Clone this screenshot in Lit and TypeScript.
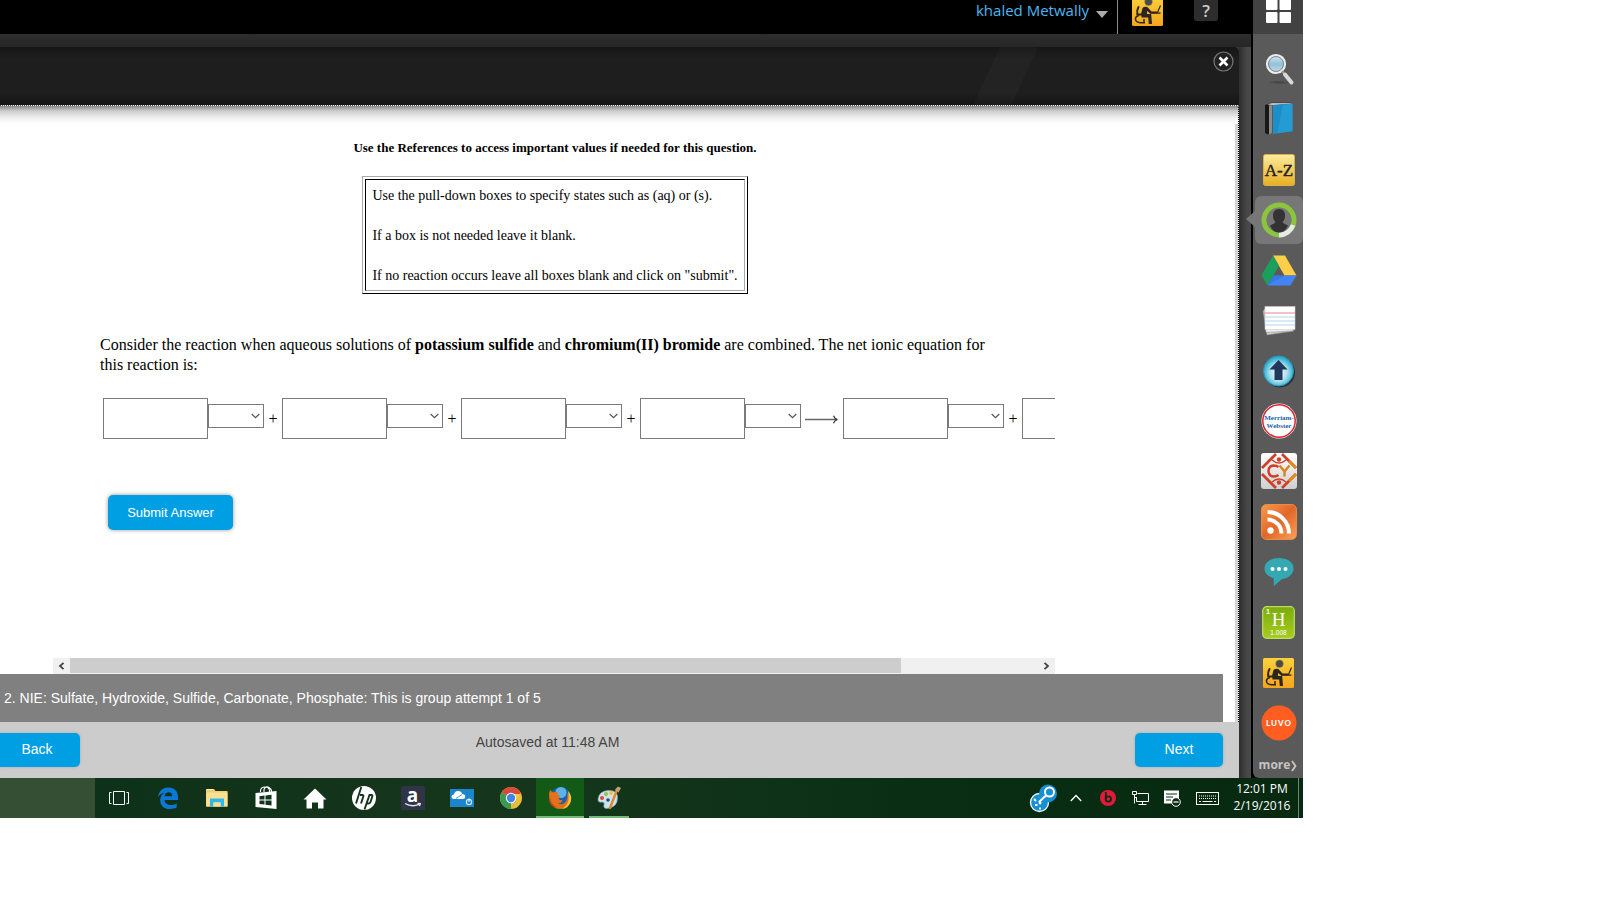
import { LitElement, html, css, svg, nothing, type TemplateResult } from "lit";
import { customElement, property } from "lit/decorators.js";
import { classMap } from "lit/directives/class-map.js";

const desk = svg`
  <defs><linearGradient id="desk" x1="0" y1="0" x2="0" y2="1"><stop offset="0" stop-color="#fbd23c"/><stop offset="1" stop-color="#f4a41c"/></linearGradient></defs>
  <rect width="31" height="30" rx="1.5" fill="url(#desk)"/>
  <circle cx="16.500" cy="5.800" r="3.800" fill="#4a4a4a" stroke="#8d8250" stroke-width=".6"/>
  <path d="M6.500 11q-2 3.500-1.200 7.500h8" fill="none" stroke="#2c2620" stroke-width="2" stroke-linecap="round"/>
  <path d="M10.500 12q2-1.800 4.800-1l4.200 4.500h5.500v1.800h-7l-3-2.300v3h4.200l.8 10h-3.200l-.6-6.500h-6.700q-1-4.500 1-9.500z" fill="#2c2620"/>
  <path d="M18 17.200h10.500M25.500 16.500l3-7" stroke="#2c2620" stroke-width="1.200" fill="none"/>
  <path d="M7 19.500q-4 1-3.500 4t5 3.200h4.500M12 23v4.500" fill="none" stroke="#2c2620" stroke-width="1.500"/>`;

interface Tool { name: string; w: number; h: number; art: TemplateResult; active?: boolean }

const tools: Tool[] = [
  { name: "Search", w: 30, h: 32, art: svg`
    <defs><linearGradient id="lens" x1="0" y1="0" x2="0" y2="1"><stop offset="0" stop-color="#d8ecf6"/><stop offset=".5" stop-color="#94c0d8"/><stop offset="1" stop-color="#c2dce8"/></linearGradient></defs>
    <path d="M5 29.500q10-3 20 .5-10 1.500-20-.5z" fill="#3c3c3c" opacity=".6"/>
    <circle cx="12" cy="11" r="9" fill="url(#lens)" stroke="#ececec" stroke-width="2.200"/>
    <circle cx="12" cy="11" r="7.500" fill="none" stroke="#707070" stroke-width=".8"/>
    <path d="M18 18l3 3.500" stroke="#9a9a9a" stroke-width="2"/>
    <path d="M21 21.500l6.500 8" stroke="#d9d9d9" stroke-width="4" stroke-linecap="round"/>` },
  { name: "Book", w: 30, h: 34, art: svg`
    <path d="M1 3l6-2v29.500l-3 2-3-1.500z" fill="#181818"/>
    <path d="M5 2.500l3 .5v28l-3 1.500z" fill="#8b8b8b"/>
    <path d="M3 2.800q2-1.600 5-1.800h19l1.500 1-19 1.200z" fill="#e8e8e8" stroke="#222" stroke-width=".5"/>
    <path d="M9 3l19.500-1.200v27.500L9 32z" fill="#1c8fc9"/>
    <path d="M19 2.500l9.500-.7v27.500l-15 2z" fill="#2ba3da" opacity=".6"/>` },
  { name: "Glossary", w: 32, h: 32, art: svg`
    <defs><linearGradient id="az" x1="0" y1="0" x2="0" y2="1"><stop offset="0" stop-color="#fdec9e"/><stop offset="1" stop-color="#e9ae22"/></linearGradient></defs>
    <rect x=".5" y=".5" width="31" height="31" rx="2" fill="url(#az)" stroke="#d9b24a"/>
    <text x="16" y="21.500" text-anchor="middle" font-family="Liberation Serif, serif" font-size="17" fill="#222" stroke="#222" stroke-width=".4">A-Z</text>` },
  { name: "Profile", w: 36, h: 36, active: true, art: svg`
    <circle cx="18" cy="18" r="15" fill="#777" stroke="#8bc53f" stroke-width="5"/>
    <path d="M18 33A15 15 0 0 0 32 23" fill="none" stroke="#e8e8e8" stroke-width="5"/>
    <circle cx="18" cy="18" r="12.300" fill="#777"/>
    <path d="M18 7q6 0 6 6.500 0 4.500-2.500 6.500 1 1.500 5.500 3.500-3 7-9 7t-9-7q4.500-2 5.500-3.500-2.500-2-2.500-6.500 0-6.500 6-6.500z" fill="#333"/>` },
  { name: "Drive", w: 36, h: 31, art: svg`
    <path d="M12 .5h12L35.500 20.500h-12z" fill="#fdce47"/>
    <path d="M12 .5l6 10.200L6.500 30.500.5 20.500z" fill="#1aa05c"/>
    <path d="M12.500 20.500h23L29.500 30.500h-23z" fill="#4284f3"/>
    <path d="M12.500 20.500h11l-17 10z" fill="#2f6ad0" opacity=".5"/>` },
  { name: "Note cards", w: 34, h: 30, art: svg`
    <path d="M1 5l4-2 27 22-27 4z" fill="#d6d6d6" stroke="#8c8c8c" stroke-width=".6"/>
    <path d="M2 3h29v22l-27 1.500z" fill="#efefef" stroke="#8c8c8c" stroke-width=".6"/>
    <rect x="3" y=".5" width="30" height="23" fill="#fff" stroke="#ccc" stroke-width=".6"/>
    <path d="M3 7h30" stroke="#e88b86"/><path d="M3 11h30M3 15h30M3 19h30" stroke="#abd6ea"/>` },
  { name: "Upload", w: 34, h: 34, art: svg`
    <defs><radialGradient id="up" cx=".5" cy=".55" r=".5"><stop offset="0" stop-color="#fff"/><stop offset=".6" stop-color="#a6dfee"/><stop offset="1" stop-color="#2faccd"/></radialGradient></defs>
    <circle cx="18" cy="18.500" r="15" fill="#2f2f2f"/>
    <circle cx="16.500" cy="17" r="15" fill="url(#up)" stroke="#2699bb"/>
    <path d="M16.500 6l9 9.500h-5V26h-8V15.500h-5z" fill="#22375a"/>` },
  { name: "Dictionary", w: 36, h: 36, art: svg`
    <circle cx="18" cy="18" r="17.500" fill="#fff"/>
    <circle cx="18" cy="18" r="16.200" fill="#fff" stroke="#d7262f" stroke-width="1.500"/>
    <text x="18" y="17" text-anchor="middle" font-family="Liberation Serif, serif" font-size="7" font-weight="700" fill="#1d5fa8">Merriam-</text>
    <text x="18" y="25" text-anchor="middle" font-family="Liberation Serif, serif" font-size="7" font-weight="700" fill="#1d5fa8">Webster</text>` },
  { name: "CY", w: 36, h: 36, art: svg`
    <defs><linearGradient id="cy" x1="0" y1="0" x2="0" y2="1"><stop offset="0" stop-color="#fff"/><stop offset="1" stop-color="#cfcfcf"/></linearGradient></defs>
    <rect width="36" height="36" rx="3" fill="url(#cy)"/>
    <path d="M1 15L15 1M21 1l14 14M1 21l14 14M21 35l14-14" stroke="#cf3f28" stroke-width="2.800"/>
    <path d="M28 8l7 7M28 28l7-7" stroke="#e08b1b" stroke-width="2.800"/>
    <circle cx="18" cy="6.500" r="2.200" fill="#cf3f28"/><circle cx="18" cy="29.500" r="2.200" fill="#cf3f28"/>
    <path d="M11 7q7 6 14 0M11 29q7-6 14 0" stroke="#cf3f28" stroke-width="1.500" fill="none"/>
    <path d="M17.500 14q-2-1.500-5-1.500-5 .5-5 5.500t5 5.500q3 0 5-1.500" stroke="#cf3f28" stroke-width="2.400" fill="none"/>
    <path d="M18.500 12.500l5 6 5-6M23.500 18.500v5" stroke="#d98318" stroke-width="2.400" fill="none"/>` },
  { name: "Feeds", w: 36, h: 36, art: svg`
    <defs><linearGradient id="rss" x1="0" y1="0" x2="1" y2="1"><stop offset="0" stop-color="#f79b4c"/><stop offset=".5" stop-color="#e2662a"/><stop offset="1" stop-color="#f8a35a"/></linearGradient></defs>
    <rect x=".5" y=".5" width="35" height="35" rx="5" fill="url(#rss)" stroke="#ed8a45"/>
    <circle cx="9.500" cy="26.500" r="3.200" fill="#fff"/>
    <path d="M6.500 15.500a14 14 0 0 1 14 14M6.500 8a21.500 21.500 0 0 1 21.500 21.500" stroke="#fff" stroke-width="4" fill="none"/>` },
  { name: "Chat", w: 30, h: 30, art: svg`
    <path d="M15 1c8 0 14.500 4 14.500 10.500 0 6-5.500 10-11.500 10.500L10 29l-.5-8C4 19.500.500 16 .500 11.500.500 5 7 1 15 1z" fill="#35a9b3"/>
    <circle cx="8.500" cy="12" r="2" fill="#fff"/><circle cx="15" cy="12" r="2" fill="#fff"/><circle cx="21.500" cy="12" r="2" fill="#fff"/>` },
  { name: "Periodic table", w: 33, h: 33, art: svg`
    <defs><linearGradient id="hy" x1="0" y1="0" x2="0" y2="1"><stop offset="0" stop-color="#79ac0c"/><stop offset="1" stop-color="#a7cc22"/></linearGradient></defs>
    <rect x=".7" y=".7" width="31.600" height="31.600" rx="4" fill="url(#hy)" stroke="#bfdc62" stroke-width="1.200"/>
    <text x="4" y="8" font-family="Liberation Sans, sans-serif" font-size="7" font-weight="700" fill="#fff">1</text>
    <text x="16.500" y="20" text-anchor="middle" font-family="Liberation Serif, serif" font-size="19" fill="#fff">H</text>
    <text x="16.500" y="29" text-anchor="middle" font-family="Liberation Sans, sans-serif" font-size="6.500" fill="#fff">1.008</text>` },
  { name: "Tutor", w: 31, h: 30, art: desk },
  { name: "Luvo", w: 36, h: 36, art: svg`
    <circle cx="18" cy="18" r="17.500" fill="#ff5e20"/>
    <text x="18" y="21" text-anchor="middle" font-family="Lato, sans-serif" font-size="8" font-weight="900" fill="#fff" letter-spacing="1">LUVO</text>` },
];

interface Task { name: string; w: number; h: number; art: TemplateResult; state?: "focus" | "open" }

const tasks: Task[] = [
  { name: "Task view", w: 20, h: 14, art: svg`<path d="M4.500.5h11v13h-11zM2.500 1.500h-2v11h2M17.500 1.500h2v11h-2" fill="none" stroke="#fff"/>` },
  { name: "Edge", w: 22, h: 22, art: svg`<path d="M1 10C2 3.500 6 .500 11.500.500 18 .500 21 5 21 10v3H7.500c.2 3.500 3 5 6.200 5 2.300 0 4.300-.6 6-1.600v4.200c-2 1-4.200 1.400-6.700 1.400-6.300 0-9.800-3.600-9.800-8.800 0-3.200 1.600-6 4.300-7.500C4.500 6.200 2.200 7.700 1 10zm6.600-.7h7.700c0-2.500-1.300-4-3.700-4-2.300 0-3.700 1.500-4 4z" fill="#0b78d8"/>` },
  { name: "File explorer", w: 22, h: 20, art: svg`
    <path d="M0 1h8l1.500 2H21.500v15.500H0z" fill="#f3cf6a"/><rect x=".5" y="4.500" width="21" height="14" fill="#fbe094"/><path d="M1 1.500h6" stroke="#fff4c8"/>
    <path d="M4 10.500h14V18.500h-3.500v-4h-7v4H4z" fill="#2cb8ea"/><path d="M7.500 14.500h7v4h-7z" fill="#fbe094"/>` },
  { name: "Store", w: 22, h: 24, art: svg`
    <path d="M5.500 6V4.500Q6 1 10 1t4.500 3.500V6M9 6V3.500Q11-.500 14 1.500t2.500 4.500" fill="none" stroke="#fff" stroke-width="1.100"/>
    <path d="M.5 7L21.500 5v18L.5 21z" fill="#fff"/>
    <path d="M4.500 10.200l5-.6v4h-5zM10.500 9.500l6-.7v4.800h-6zM4.500 14.600h5v4l-5-.6zM10.500 14.600h6v4.800l-6-.7z" fill="#12341c"/>` },
  { name: "Home", w: 24, h: 21, art: svg`<path d="M12 .500L23.500 11.500h-3V20.500h-5.500v-6h-6v6H3.500v-9H.500z" fill="#fff"/>` },
  { name: "HP", w: 24, h: 24, art: svg`
    <circle cx="12" cy="12" r="12" fill="#fff"/>
    <path d="M9.300 1L4 17.500M8 9h2.500q1.300 0 .8 1.500L9 17.500M12.500 23.500L17.500 9h2q1.300 0 .8 1.500l-1.800 5.500q-.5 1.500-2 1.500h-1.500" stroke="#12341c" stroke-width="1.900" fill="none"/>` },
  { name: "Amazon", w: 24, h: 24, art: svg`
    <rect width="24" height="24" rx="1.500" fill="#2f3447"/>
    <text x="11.500" y="15.500" text-anchor="middle" font-family="Open Sans, sans-serif" font-size="19" font-weight="700" fill="#fff">a</text>
    <path d="M4 17.500q7 4 14 .8M16.500 17.500l2.800.2-.8 2.300" stroke="#e8e8e8" stroke-width="1.300" fill="none"/>` },
  { name: "Cloud", w: 24, h: 18, art: svg`
    <rect width="24" height="18" fill="#1b86cb"/>
    <path d="M4 10q-2.500 0-2.500-2.200T4 5.500q.5-3.500 4-3.500t4.200 3q3 0 3 2.500T13 10z" fill="#fff"/><path d="M6 9.500l6-4" stroke="#1b86cb" stroke-width=".8"/>
    <circle cx="19" cy="13" r="2.600" fill="none" stroke="#c7e4f5" stroke-width="1.200"/><path d="M19 9.500v3.500" stroke="#fff"/>` },
  { name: "Chrome", w: 22, h: 22, art: svg`
    <circle cx="11" cy="11" r="11" fill="#e8bf36"/>
    <path d="M11 11L1.500 5.500A11 11 0 0 1 20.500 5.500z" fill="#d64a3b"/><path d="M11 5.500h9.500L18 11h-7z" fill="#f6c944"/><path d="M2 5h18.800L20 7H11z" fill="#d64a3b"/>
    <path d="M1.500 5.500A11 11 0 0 0 11 22l5-9-5-2z" fill="#3a9a54"/><path d="M11 22l5-9h-5z" fill="#e8c344"/>
    <circle cx="11" cy="11" r="5.200" fill="#fff"/><circle cx="11" cy="11" r="4.200" fill="#4384e8"/>` },
  { name: "Firefox", w: 24, h: 24, state: "focus", art: svg`
    <circle cx="12.500" cy="11.500" r="10.500" fill="#1f5fae"/><circle cx="13" cy="6.500" r="5.500" fill="#5cb3e6"/>
    <path d="M2 4l3 2.500Q8 5 10 6.500L9.500 9l3 1-2 2.500q1 2.500 4 1.500-1 4-5 3 5 3 8.500-1.500 2-3.500 1.500-8.500Q23.500 11 22.500 15 20 23 12 23T1 13Q.500 8 2 4z" fill="#e6711c"/>
    <path d="M20 5q4 4 3 10-2 7-9 8 6-4 6.500-9 .5-4-.5-9z" fill="#f6c035"/><path d="M2 8q-1 9 7 14-6-1-8-7z" fill="#c2421b"/>` },
  { name: "Paint", w: 24, h: 24, state: "open", art: svg`
    <path d="M1 13Q2 5 11 4.500q9-.500 9.500 6Q21 22 9 22.500q-3-.500-2-3.500t-2-3q-4 1-4-3z" fill="#cfe3ee" stroke="#7fa4b8" stroke-width=".7"/>
    <circle cx="5" cy="12" r="2" fill="#e04a3c"/><circle cx="9" cy="8" r="2" fill="#8ec34a"/><circle cx="14" cy="7" r="2" fill="#f0c13a"/><circle cx="11" cy="14" r="1.800" fill="#24506a"/>
    <path d="M20 4l-7 18" stroke="#d98a35" stroke-width="2.400" stroke-linecap="round"/><path d="M18 3.500L21 .500l3 1.500-2.500 4.500z" fill="#c2a070"/>` },
];

const tray: Task[] = [
  { name: "Password key", w: 28, h: 28, art: svg`
    <circle cx="9.500" cy="18.500" r="9" fill="#1690d2" stroke="#fff" stroke-width="1.300"/>
    <path d="M4 15l2 2M5 21h2.500M10 23.500v2" stroke="#fff" stroke-width="1.800"/><circle cx="10" cy="19" r="1.400" fill="#fff"/>
    <circle cx="18" cy="9.500" r="9" fill="#1690d2"/>
    <circle cx="19.500" cy="8" r="4.500" fill="none" stroke="#fff" stroke-width="2"/><path d="M16 11.500l-7 6.500" stroke="#fff" stroke-width="2"/>` },
  { name: "Hidden icons", w: 12, h: 8, art: svg`<path d="M.8 7L6 1.500 11.200 7" fill="none" stroke="#fff" stroke-width="1.300"/>` },
  { name: "Beats", w: 16, h: 16, art: svg`<circle cx="8" cy="8" r="8" fill="#e21a3a"/><path d="M5.800 2v7" stroke="#0b2c14" stroke-width="1.800"/><circle cx="8.300" cy="9" r="2.700" fill="none" stroke="#0b2c14" stroke-width="1.800"/>` },
  { name: "Network", w: 17, h: 14, art: svg`<path d="M5.500 2.500h11v8h-12V6M10.500 10.500v3M6.500 13.500h8M2.500 6v6.500M.500.500h4v3h-4zM2.500 3.500v3h2" fill="none" stroke="#fff"/>` },
  { name: "Notifications", w: 17, h: 17, art: svg`<path d="M0 .5h15v13H0z" fill="#fff"/><path d="M2 4h11M2 7h7M2 10h5" stroke="#0b2c14" stroke-width="1.200"/><circle cx="12" cy="12" r="4.300" fill="#0b2c14" stroke="#fff"/><path d="M9.500 12h5" stroke="#fff" stroke-width="1.200"/>` },
  { name: "Touch keyboard", w: 23, h: 13, art: svg`<rect x=".5" y=".5" width="22" height="12" fill="none" stroke="#fff"/><path d="M3 4h17.500M3 6.500h17.500" stroke="#fff" stroke-dasharray="1 1"/><path d="M3 9.500h2M6.500 9.500h10M18 9.500h2" stroke="#fff"/>` },
];

const icon = (w: number, h: number, art: TemplateResult) =>
  html`<svg width=${w} height=${h} viewBox="0 0 ${w} ${h}" aria-hidden="true">${art}</svg>`;

@customElement("chem-term")
class ChemTerm extends LitElement {
  @property({ type: Number }) index = 1;

  static styles = css`
    :host { display: flex; flex: none; }
    input { box-sizing: border-box; width: 105px; height: 41px; margin: 0; padding: 4px; border: 1px solid #7a7a7a; border-radius: 0; background: #fff; font: 16px "Liberation Serif", serif; }
    .state { display: grid; width: 56px; margin-top: 6px; height: 24px; align-items: center; }
    select { grid-area: 1 / 1; width: 100%; height: 24px; appearance: none; border: 1px solid #7a7a7a; border-radius: 0; background: #fff; margin: 0; padding: 0 18px 0 4px; }
    svg { grid-area: 1 / 1; justify-self: end; margin-right: 4px; pointer-events: none; }
  `;

  render() {
    return html`
      <input type="text" aria-label="Species ${this.index}" />
      <span class="state">
        <select aria-label="State of species ${this.index}">
          <option></option><option>(s)</option><option>(l)</option><option>(g)</option><option>(aq)</option>
        </select>
        <svg width="9" height="6" viewBox="0 0 9 6"><path d="M.7 1l3.800 3.700L8.300 1" fill="none" stroke="#555" stroke-width="1.200"/></svg>
      </span>`;
  }
}

@customElement("tool-rail")
class ToolRail extends LitElement {
  static styles = css`
    :host { display: flex; flex-direction: column; background: #000; }
    .apps { height: 34px; margin-left: 2px; padding: 0; border: 0; background: #424242; display: flex; justify-content: center; align-items: flex-start; }
    .rail { flex: 1; margin-left: 2px; padding-top: 10px; background: #5a5a5a; border-bottom-left-radius: 6px; display: flex; flex-direction: column; align-items: stretch; }
    .tool { position: relative; flex: 1 0 auto; min-height: 50px; padding: 0 0 0 1px; border: 0; background: none; display: grid; place-items: center; }
    .active { background: #777; border-radius: 6px; margin: 1px 0 1px 2px; min-height: 48px; padding: 0; }
    .active::before { content: ""; position: absolute; left: -9px; top: 15px; border: solid transparent; border-width: 8px 9px 8px 0; border-right-color: #777; }
    svg { display: block; overflow: visible; }
    .more { align-self: center; display: flex; align-items: center; gap: 1px; height: 30px; padding-top: 4px; box-sizing: border-box; color: #c4c4c4; font: 700 12px/20px "Open Sans", sans-serif; text-decoration: none; }
    .more svg { margin-top: 2px; }
  `;

  render() {
    return html`
      <button class="apps" aria-label="Apps">
        ${icon(26, 24, svg`<g fill="#fff"><path d="M1 0h11.500v9a1 1 0 0 1-1 1H2a1 1 0 0 1-1-1zM14.500 0H26v9a1 1 0 0 1-1 1h-9.500a1 1 0 0 1-1-1z"/><rect x="1" y="12" width="11.500" height="11" rx="1"/><rect x="14.500" y="12" width="11.500" height="11" rx="1"/></g>`)}
      </button>
      <nav class="rail">
        ${tools.map((t) => html`<button class=${classMap({ tool: true, active: !!t.active })} aria-label=${t.name}>${icon(t.w, t.h, t.art)}</button>`)}
        <a class="more" href="#more">more${icon(6, 12, svg`<path d="M1 1l3.500 5L1 11" fill="none" stroke="#c4c4c4" stroke-width="1.900"/>`)}</a>
      </nav>`;
  }
}

@customElement("task-bar")
class TaskBar extends LitElement {
  static styles = css`
    :host { display: flex; height: 40px; background: linear-gradient(90deg, #0b3018, #16361c 35%, #12351a 50%, #0a2e14 70%, #06290f); color: #fff; }
    .start { width: 95px; background: #344f34; }
    .tasks, .tray { display: flex; }
    .tasks { gap: 1px; padding-right: 1px; }
    .tray { margin-left: auto; }
    button { padding: 0; border: 0; background: none; display: grid; place-items: center; width: 48px; box-sizing: border-box; }
    .focus { background: #125a16; border-bottom: 2px solid #76b976; padding-top: 2px; }
    .open { width: 40px; margin: 0 4px; border-bottom: 2px solid #76b976; padding-top: 2px; }
    .tray button { width: 32px; }
    .tray button:last-of-type { width: 38px; }
    svg { display: block; overflow: visible; }
    .clock { width: 72px; padding-top: 2px; text-align: center; font: 12px/17px "Open Sans", sans-serif; }
    .edge { width: 4px; border-left: 1px solid #6c8870; }
  `;

  render() {
    const item = (t: Task) => html`<button class=${t.state ?? nothing} aria-label=${t.name}>${icon(t.w, t.h, t.art)}</button>`;
    return html`
      <div class="start"></div>
      <div class="tasks">${tasks.map(item)}</div>
      <div class="tray">
        ${tray.map(item)}
        <div class="clock"><div>12:01 PM</div><div>2/19/2016</div></div>
        <div class="edge"></div>
      </div>`;
  }
}

@customElement("app-root")
class AppRoot extends LitElement {
  static styles = css`
    :host { display: block; background: #fff; font-family: "Liberation Sans", sans-serif; }
    .screen { max-width: 1303px; }
    .window { display: grid; grid-template-columns: minmax(0, 1fr) 52px; }
    .left { display: flex; flex-direction: column; }
    .topbar { height: 34px; padding-right: 33px; background: #000; display: flex; justify-content: flex-end; align-items: flex-start; }
    .topbar button { padding: 0; border: 0; background: none; display: block; }
    .user { color: #4db6f0; font: 15px/20px "Open Sans", sans-serif; text-decoration: none; display: flex; align-items: center; gap: 7px; }
    .user svg { margin-top: 8px; }
    .rule { width: 1px; height: 34px; margin: 0 14px 0 9px; background: #8c8c8c; }
    .topbar .help { width: 24px; height: 21px; margin-left: 31px; background: #2d2d2d; border-radius: 0 0 3px 3px; color: #ccc; font: 600 17px/17px "Open Sans", sans-serif; }
    svg { display: block; }

    .stage { flex: 1; display: flex; flex-direction: column; padding: 13px 12px 0 0; background: linear-gradient(#2e2e2e, #262626 13px, transparent 13px), linear-gradient(90deg, #3a3a3a calc(100% - 12px), #2e2e2e calc(100% - 12px), #474747 calc(100% - 4px), #4a4a4a); }
    .head { height: 58px; box-sizing: border-box; padding: 4px 5px 0 0; border-radius: 0 5px 0 0; background: linear-gradient(115deg, transparent 79%, #ffffff06 79%, #ffffff06 82%, transparent 82%), linear-gradient(#161616, #1e1e1e 20%, #1e1e1e 80%, #141414); display: flex; justify-content: flex-end; align-items: flex-start; }
    .head button { padding: 0; border: 0; background: none; }

    .page { flex: 1; display: flex; flex-direction: column; border-top: 1px dotted #555; border-right: 1px dotted #000; background: linear-gradient(#888, #ccc 5px, #f1f1f1 12px, #fff 18px); }
    .page-scroll { display: grid; grid-template-columns: minmax(0, 1fr) 3px; flex: 1; }
    .track { margin-top: 18px; background: #d4d4d4; }
    .inner { display: flex; flex-direction: column; }
    .body { flex: 1; min-height: 552px; box-sizing: border-box; margin: 0 180px 0 53px; padding: 32px 45px 0 47px; overflow: hidden; font-family: "Liberation Serif", serif; color: #000; display: flex; flex-direction: column; align-items: flex-start; }
    h1 { align-self: center; margin: 0 0 18px; font-size: 13px; line-height: 20px; }
    .rules { align-self: center; margin-bottom: 41px; padding: 2px; border: 1px solid; border-color: #aaa #000 #000 #aaa; }
    .rules div { padding: 6px 6px 4px; border: 1px solid; border-color: #000 #aaa #aaa #000; }
    .rules p { margin: 0 0 20px; font-size: 14px; line-height: 20px; }
    .rules p:last-child { margin: 0; }
    .question { margin: 0 0 23px; font-size: 16px; line-height: 20px; }
    .equation { display: flex; margin: 0 0 56px 3px; }
    .plus { flex: none; width: 18px; text-align: center; font-size: 16px; line-height: 41px; }
    .arrow { flex: none; width: 42px; display: grid; place-items: center; padding-top: 2px; box-sizing: border-box; }
    .btn { height: 34px; border: 0; border-radius: 5px; background: #009fe3; color: #fff; font: 14px/20px "Liberation Sans", sans-serif; padding: 0 0 2px; }
    .submit { width: 125px; height: 35px; margin-left: 8px; box-shadow: 0 0 4px #999; font-size: 13px; padding: 0; }

    .hscroll { margin: 0 180px 0 53px; height: 16px; background: #f0f0f0; display: grid; grid-template-columns: 17px 831fr 137fr 17px; align-items: center; justify-items: center; }
    .thumb { justify-self: stretch; height: 15px; align-self: start; background: #cdcdcd; }
    .hscroll svg:last-child { grid-column: 4; }
    .attempt { margin: 0 12px 0 0; padding: 0 4px; height: 48px; background: #808080; color: #fff; font-size: 14px; line-height: 48px; }
    .footer { height: 56px; background: #ccc; display: grid; grid-template-columns: 1fr auto 1fr; align-items: start; }
    .footer .btn { margin-top: 11px; box-shadow: 0 0 3px #aaa; }
    .footer .back { width: 80px; border-radius: 0 5px 5px 0; padding-right: 6px; }
    .saved { margin-top: 10px; margin-right: 144px; color: #444; font-size: 14px; line-height: 20px; }
    .next { width: 88px; justify-self: end; margin-right: 16px; }
  `;

  render() {
    const plus = html`<span class="plus">+</span>`;
    return html`
      <div class="screen">
        <div class="window">
          <div class="left">
            <header class="topbar">
              <a class="user" href="#account">khaled Metwally${icon(12, 7, svg`<path d="M0 0h12L6 7z" fill="#aaa"/>`)}</a>
              <span class="rule"></span>
              <button aria-label="Tutor"><svg width="31" height="26" viewBox="0 4 31 26">${desk}</svg></button>
              <button class="help" aria-label="Help">?</button>
            </header>
            <main class="stage">
              <div class="head">
                <button aria-label="Close">${icon(21, 21, svg`<circle cx="10.500" cy="10.500" r="9.500" fill="#222" stroke="#777" stroke-width="1.200"/><path d="M6.500 6.500l8 8M14.500 6.500l-8 8" stroke="#fff" stroke-width="2.600"/>`)}</button>
              </div>
              <div class="page">
                <div class="page-scroll">
                  <div class="inner">
                    <div class="body">
                      <h1>Use the References to access important values if needed for this question.</h1>
                      <div class="rules"><div>
                        <p>Use the pull-down boxes to specify states such as (aq) or (s).</p>
                        <p>If a box is not needed leave it blank.</p>
                        <p>If no reaction occurs leave all boxes blank and click on "submit".</p>
                      </div></div>
                      <p class="question">Consider the reaction when aqueous solutions of <b>potassium sulfide</b> and <b>chromium(II) bromide</b> are combined. The net ionic equation for this reaction is:</p>
                      <div class="equation">
                        <chem-term .index=${1}></chem-term>${plus}
                        <chem-term .index=${2}></chem-term>${plus}
                        <chem-term .index=${3}></chem-term>${plus}
                        <chem-term .index=${4}></chem-term>
                        <span class="arrow">${icon(34, 9, svg`<path d="M0 4.500h32" stroke="#666" stroke-width="1.500"/><path d="M28.500 .8q1 3 4 3.700-3 .8-4 3.700" fill="none" stroke="#333" stroke-width="1.200"/>`)}</span>
                        <chem-term .index=${5}></chem-term>${plus}
                        <chem-term .index=${6}></chem-term>
                      </div>
                      <button class="btn submit">Submit Answer</button>
                    </div>
                    <div class="hscroll">
                      ${icon(7, 8, svg`<path d="M5.500.8L2 4l3.500 3.200" fill="none" stroke="#444" stroke-width="1.800"/>`)}
                      <span class="thumb"></span>
                      ${icon(7, 8, svg`<path d="M1.500.8L5 4 1.500 7.200" fill="none" stroke="#444" stroke-width="1.800"/>`)}
                    </div>
                    <div class="attempt">2. NIE: Sulfate, Hydroxide, Sulfide, Carbonate, Phosphate: This is group attempt 1 of 5</div>
                  </div>
                  <div class="track"></div>
                </div>
              </div>
              <footer class="footer">
                <button class="btn back">Back</button>
                <span class="saved">Autosaved at 11:48 AM</span>
                <button class="btn next">Next</button>
              </footer>
            </main>
          </div>
          <tool-rail></tool-rail>
        </div>
        <task-bar></task-bar>
      </div>`;
  }
}
